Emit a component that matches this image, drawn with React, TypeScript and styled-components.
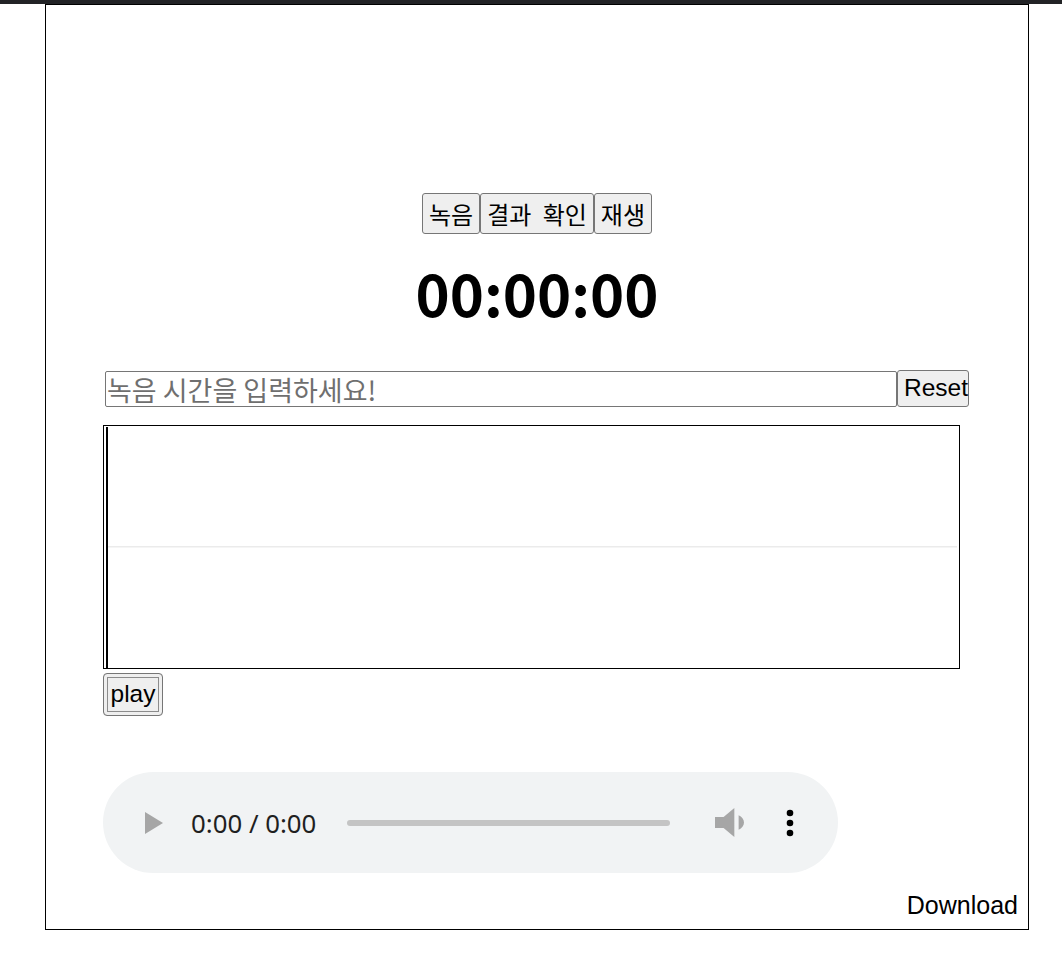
import React, { useState } from 'react';
import styled, { createGlobalStyle } from 'styled-components';

const GlobalStyle = createGlobalStyle`
  html, body {
    margin: 0;
    padding: 0;
    background: #ffffff;
  }
  body {
    font-family: "Liberation Sans", Arial, sans-serif;
  }
`;

const TopStrip = styled.div`
  height: 4px;
  background: #222326;
`;

const Frame = styled.main`
  box-sizing: border-box;
  width: 984px;
  height: 926px;
  margin-left: 45px;
  border: 1px solid #000;
  padding-top: 188px;
  display: flex;
  flex-direction: column;
`;

const ButtonRow = styled.div`
  display: flex;
  justify-content: center;
`;

const NativeButton = styled.button<{ $korean?: boolean }>`
  box-sizing: border-box;
  height: 41px;
  margin: 0;
  padding: 0 6px;
  border: 1px solid #767676;
  border-radius: 3px;
  background: #efefef;
  color: #000;
  font-family: ${({ $korean }) =>
    $korean ? '"Noto Sans CJK KR", "Noto Sans", sans-serif' : '"Liberation Sans", Arial, sans-serif'};
  font-size: ${({ $korean }) => ($korean ? '24px' : '24.5px')};
  word-spacing: ${({ $korean }) => ($korean ? '6px' : '0')};
  line-height: 1;
  white-space: nowrap;
  cursor: pointer;
`;

const Timer = styled.h1`
  margin: 22px 0 0;
  text-align: center;
  font-family: "Noto Sans CJK KR", "Noto Sans", sans-serif;
  font-size: 58px;
  font-weight: 700;
  line-height: 72px;
  color: #000;
`;

const InputRow = styled.div`
  margin-top: 42px;
  display: flex;
  justify-content: center;
  align-items: flex-start;
`;

const TimeInput = styled.input`
  box-sizing: border-box;
  width: 792px;
  height: 36px;
  margin: 1px 0 0;
  padding: 0 1px;
  border: 1px solid #767676;
  border-radius: 2px;
  font-family: "Noto Sans CJK KR", "Noto Sans", sans-serif;
  font-size: 27px;
  color: #000;
  outline: none;

  &::placeholder {
    color: #6f6f6f;
  }
`;

const ResetButton = styled(NativeButton)`
  width: 72px;
  height: 37px;
`;

const Content = styled.section`
  padding-left: 57px;
  display: flex;
  flex-direction: column;
  align-items: flex-start;
`;

const WaveBox = styled.div`
  position: relative;
  box-sizing: border-box;
  width: 857px;
  height: 244px;
  margin-top: 18px;
  border: 1px solid #000;
`;

const WaveCanvas = styled.svg`
  display: block;
  width: 100%;
  height: 100%;
`;

const Cursor = styled.div`
  position: absolute;
  left: 2px;
  top: 1px;
  bottom: 0;
  width: 2px;
  background: #000;
`;

const PlayButton = styled(NativeButton)`
  width: 60px;
  height: 43px;
  margin-top: 4px;
  border-radius: 4px;
  box-shadow: inset 0 0 0 3px #efefef, inset 0 0 0 4px #8c8c8c;
`;

const AudioPlayer = styled.div`
  box-sizing: border-box;
  width: 735px;
  height: 101px;
  margin-top: 56px;
  padding: 0 38px 0 42px;
  border-radius: 51px;
  background: #f1f3f4;
  display: flex;
  align-items: center;
`;

const TimeText = styled.span`
  margin-left: 28px;
  font-family: "Noto Sans", "Open Sans", sans-serif;
  font-size: 25.8px;
  color: #1f1f1f;
  white-space: nowrap;
`;

const Track = styled.div`
  flex-shrink: 0;
  width: 323px;
  height: 6px;
  margin-left: 31px;
  border-radius: 3px;
  background: #c4c4c4;
`;

const VolumeIcon = styled.svg`
  margin-left: 45px;
  flex-shrink: 0;
`;

const MenuDots = styled.svg`
  margin-left: 42px;
  flex-shrink: 0;
`;

const DownloadLink = styled.a`
  align-self: flex-end;
  margin: 18px 10px 0 0;
  font-family: "Liberation Sans", Arial, sans-serif;
  font-size: 25px;
  color: #000;
  text-decoration: none;
  cursor: pointer;
`;

const App: React.FC = () => {
  const [duration, setDuration] = useState('');

  return (
    <>
      <GlobalStyle />
      <TopStrip />
      <Frame>
        <ButtonRow>
          <NativeButton $korean>녹음</NativeButton>
          <NativeButton $korean>결과 확인</NativeButton>
          <NativeButton $korean>재생</NativeButton>
        </ButtonRow>

        <Timer>00:00:00</Timer>

        <InputRow>
          <TimeInput
            placeholder="녹음 시간을 입력하세요!"
            value={duration}
            onChange={e => setDuration(e.target.value)}
          />
          <ResetButton onClick={() => setDuration('')}>Reset</ResetButton>
        </InputRow>

        <Content>
          <WaveBox>
            <WaveCanvas viewBox="0 0 855 242" preserveAspectRatio="none">
              <rect x="3" y="120" width="850" height="1.5" fill="#ebebeb" />
            </WaveCanvas>
            <Cursor />
          </WaveBox>

          <PlayButton>play</PlayButton>

          <AudioPlayer>
            <svg width="18" height="22" viewBox="0 0 18 22">
              <polygon points="0,0 18,11 0,22" fill="#a6a6a6" />
            </svg>
            <TimeText>0:00 / 0:00</TimeText>
            <Track />
            <VolumeIcon width="29" height="29" viewBox="5 4 13.5 16" preserveAspectRatio="none">
              <path
                d="M18.5 12c0-1.77-1.02-3.29-2.5-4.03v8.05c1.48-.73 2.5-2.25 2.5-4.02zM5 9v6h4l5 5V4L9 9H5z"
                fill="#a6a6a6"
              />
            </VolumeIcon>
            <MenuDots width="8" height="28" viewBox="0 0 8 28">
              <circle cx="4" cy="4" r="3.3" fill="#000" />
              <circle cx="4" cy="14" r="3.3" fill="#000" />
              <circle cx="4" cy="24" r="3.3" fill="#000" />
            </MenuDots>
          </AudioPlayer>
        </Content>

        <DownloadLink>Download</DownloadLink>
      </Frame>
    </>
  );
};

export default App;
